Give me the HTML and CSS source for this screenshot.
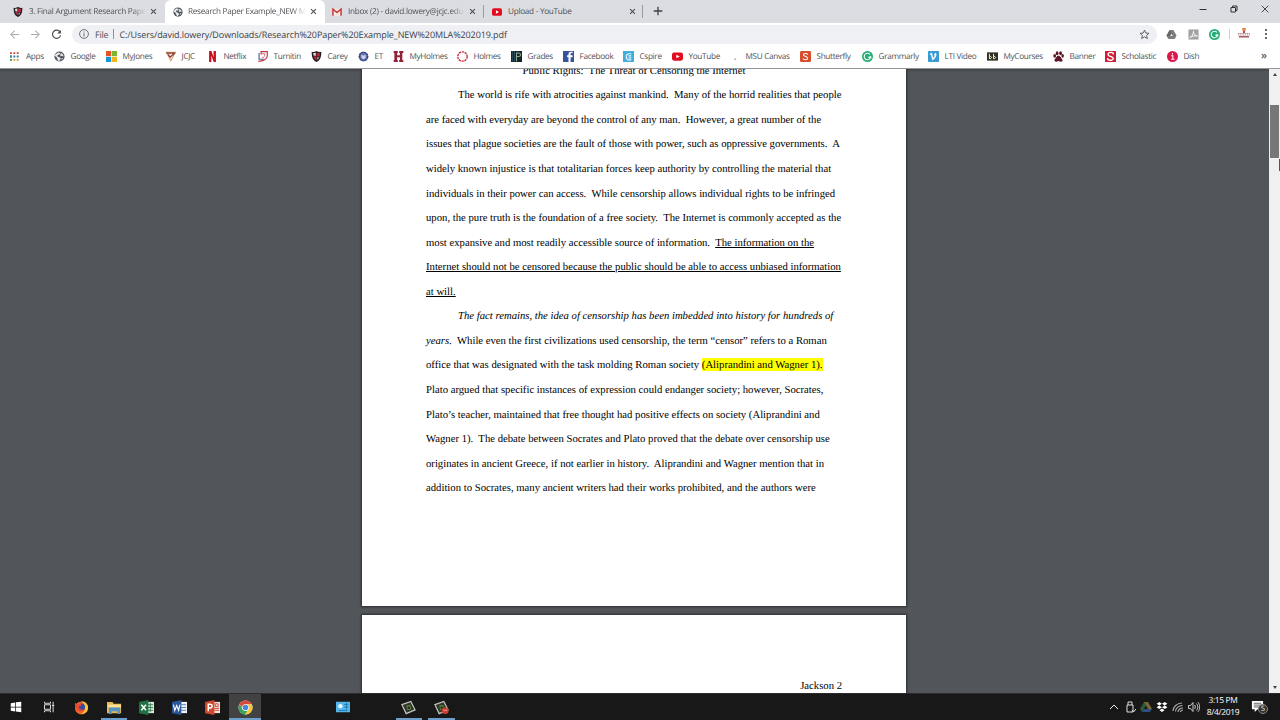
FILE: index.html
```html
<!DOCTYPE html>
<html lang="en">
<head>
<meta charset="utf-8">
<title>Research Paper Example_NEW MLA 2019.pdf</title>
<link rel="stylesheet" href="styles.css">
</head>
<body>
<svg class="defs" aria-hidden="true">
  <symbol id="globe" viewBox="0 0 16 16"><circle cx="8" cy="8" r="7.4" fill="#53575c"/><path d="M2 5l4-3 3 1-1 2-3 1 0 2 3 1 2 2-2 3-1 1-2-3-1-3-3-2zM10 3l3 2 1 3-3-1-1 1-1-2zM11 10l2 0-2 3z" fill="#e8eaed"/></symbol>
  <symbol id="shield" viewBox="0 0 16 16"><path d="M1 1c3 1 5 0 7-1 2 1 4 2 7 1 0 7-1 12-7 15C2 13 1 8 1 1z" fill="#241c20"/><path d="M8 2c2 1 3 1 5 1 0 2 0 3-.4 5H8zM3.400 8H8v5.500C5 12 4 10 3.400 8z" fill="#b32740"/><path d="M3 3c2 0 3 0 4-1v5H4z" fill="#ddd"/><path d="M9 9h3c-1 2-2 3-3 4z" fill="#aaa"/></symbol>
  <symbol id="gmail" viewBox="0 0 16 16"><path d="M1 3h14v11H1z" fill="#f5e9e7"/><path d="M1.500 14V3.500L8 9l6.500-5.500V14" fill="none" stroke="#c93d35" stroke-width="2.400"/></symbol>
  <symbol id="yt" viewBox="0 0 16 16"><rect y="2" width="16" height="12" rx="3" fill="#e30b20"/><path d="M6.300 5.300l5 2.700-5 2.700z" fill="#fff"/></symbol>
  <symbol id="close" viewBox="0 0 10 10"><path d="M1.500 1.500l7 7m0-7l-7 7" stroke="#4a4d52" stroke-width="1.500"/></symbol>
  <symbol id="grammarly" viewBox="0 0 16 16"><circle cx="8" cy="8" r="8" fill="#27ad76"/><path d="M11.500 5A4.700 4.700 0 1 0 12.500 9H9" fill="none" stroke="#fff" stroke-width="1.500"/><path d="M10.500 8h2.500v3" fill="none" stroke="#fff"/></symbol>
  <symbol id="cameraapp" viewBox="0 0 16 16"><path d="M1 5L10.500 1.500 15 10.500 5.500 14.500z" fill="#30362c" stroke="#c5c6be" stroke-width="1.300"/><path d="M5.500 5.500L10 5l1 5-4.500 1z" fill="#55743a"/><path d="M7.500 7l2 .5-.5 2-2-.5z" fill="#20251d"/></symbol>
</svg>

<header class="tabstrip">
  <div class="tab"><svg class="fav"><use href="#shield"/></svg><span class="title fade">3. Final Argument Research Paper</span><svg class="x"><use href="#close"/></svg></div>
  <div class="tab active"><svg class="fav"><use href="#globe"/></svg><span class="title fade">Research Paper Example_NEW M</span><svg class="x"><use href="#close"/></svg></div>
  <div class="tab third"><svg class="fav"><use href="#gmail"/></svg><span class="title fade">Inbox (2) - david.lowery@jcjc.edu</span><svg class="x"><use href="#close"/></svg></div>
  <div class="tab fourth"><svg class="fav"><use href="#yt"/></svg><span class="title">Upload - YouTube</span><svg class="x"><use href="#close"/></svg></div>
  <svg class="plus" viewBox="0 0 10 10"><path d="M5 .7v8.600M.7 5h8.600" stroke="#3c4043" stroke-width="1.300"/></svg>
  <div class="window-controls">
    <svg viewBox="0 0 10 10"><path d="M1.500 5.500h7" stroke="#333"/></svg>
    <svg viewBox="0 0 10 10"><path d="M2 3.500h4.500V8H2zM3.500 3.300V2H8v4.500H6.700" fill="none" stroke="#333"/></svg>
    <svg viewBox="0 0 10 10"><path d="M1.700 1.700l6.600 6.600m0-6.600L1.700 8.300" stroke="#333" stroke-width=".9"/></svg>
  </div>
</header>

<div class="toolbar">
  <svg class="nav" viewBox="0 0 12 12"><path d="M11 6H2m4.200-4.200L2 6l4.200 4.200" fill="none" stroke="#aaabad" stroke-width="1.100"/></svg>
  <svg class="nav" viewBox="0 0 12 12"><path d="M1 6h9M5.800 1.800L10 6l-4.200 4.200" fill="none" stroke="#aaabad" stroke-width="1.100"/></svg>
  <svg class="nav" viewBox="0 0 12 12"><path d="M10 3.300A4.500 4.500 0 1 0 10.500 7" fill="none" stroke="#44474a" stroke-width="1.300"/><path d="M10.800 1v4H6.800z" fill="#44474a"/></svg>
  <div class="omnibox">
    <svg class="info" viewBox="0 0 10 10"><circle cx="5" cy="5" r="4.400" fill="none" stroke="#5f6368" stroke-width=".9"/><path d="M5 4.300v3.200M5 2.500v1" stroke="#5f6368"/></svg>
    <span class="scheme">File</span><i class="bar"></i>
    <span class="url">C:/Users/david.lowery/Downloads/Research%20Paper%20Example_NEW%20MLA%202019.pdf</span>
    <svg class="star" viewBox="0 0 12 12"><path d="M6 1.200l1.400 3.200 3.500.3-2.600 2.300.8 3.400L6 8.600l-3.100 1.800.8-3.400L1.100 4.700l3.500-.3z" fill="none" stroke="#44474b" stroke-width=".9"/></svg>
  </div>
  <svg class="ext" viewBox="0 0 12 12"><path d="M4 1h4l3.500 6-2 4h-7L.5 7z" fill="#7e7e7e"/><path d="M4 1l4 6.500H.5z" fill="#666"/><path d="M6 5l1.500 2.500h-3z" fill="#eee"/></svg>
  <svg class="ext" viewBox="0 0 12 12"><path d="M.5.500h11v11H.5z" fill="#a2a2a2"/><path d="M2 9.500c2-1 4-4 4-7 0 3 2 5 4.200 5.200C7 7 4 8 2 9.500z" fill="none" stroke="#fff"/></svg>
  <svg class="ext"><use href="#grammarly"/></svg>
  <i class="ext-bar"></i>
  <svg class="avatar" viewBox="0 0 14 12"><path d="M5 1h4L8.500 4h-3z" fill="#db8d4f"/><path d="M6 4h2v2H6z" fill="#a74a4a"/><path d="M1 6.500h12M1 8h12" stroke="#b98087" stroke-dasharray="1.500 .7"/><path d="M2 9.800h10" stroke="#934149" stroke-width="1.300"/></svg>
  <svg class="dots" viewBox="0 0 4 12"><circle cx="2" cy="2" r="1" fill="#333"/><circle cx="2" cy="6" r="1" fill="#333"/><circle cx="2" cy="10" r="1" fill="#333"/></svg>
</div>

<nav class="bookmarks">
  <a><svg viewBox="0 0 16 16"><g stroke-width="3.400" stroke-dasharray="3.400 2.600"><path d="M0 2h16" stroke="#cc4a3b"/><path d="M0 8h16" stroke="#4275a8"/><path d="M0 14h16" stroke="#c8a13b"/></g><path d="M0 6.300h3.400v3.400H0zM0 12.300h3.400v3.400H0z" fill="#3a9a5c"/></svg>Apps</a>
  <a><svg><use href="#globe"/></svg>Google</a>
  <a><svg viewBox="0 0 16 16"><path d="M0 0h7.500v7.500H0z" fill="#e65325"/><path d="M8.500 0H16v7.500H8.500z" fill="#78b72d"/><path d="M0 8.500h7.500V16H0z" fill="#1798d5"/><path d="M8.500 8.500H16V16H8.500z" fill="#f4b51b"/></svg>MyJones</a>
  <a><svg viewBox="0 0 16 16"><path d="M2 2h13L8.500 14z" fill="#faecd5" stroke="#cf9a67" stroke-width="1.500"/><path d="M2 3h13M4.500 5l3 4 5.500-5" stroke="#8a3438" stroke-width="1.700" fill="none"/></svg>JCJC</a>
  <a><svg viewBox="0 0 16 16"><path d="M3 0h3.500l3 9V0H13v16H9.800L6.300 7v9H3z" fill="#cb1020"/></svg>Netflix</a>
  <a><svg viewBox="0 0 16 16"><path d="M3 3v9h7" stroke="#43639a" stroke-width="1.700" fill="none"/><path d="M6 5V1h9v6c0 5-6 8-13 8" stroke="#c73245" stroke-width="1.700" fill="none"/><path d="M7 4h4c1 3-1 6-4 6" stroke="#c73245" fill="none"/></svg>Turnitin</a>
  <a><svg><use href="#shield"/></svg>Carey</a>
  <a><svg viewBox="0 0 16 16"><circle cx="8" cy="8" r="7" fill="#6672aa"/><circle cx="8" cy="8" r="6" fill="none" stroke="#304488" stroke-width="2" stroke-dasharray="3 1"/><path d="M5 5l3 2 3-2v5l-3 2-3-2z" fill="#d2d4e6"/></svg>ET</a>
  <a><svg viewBox="0 0 16 16"><path d="M1 0h6v3H6v3h4V3H9V0h6v3h-1.500v10H15v3H9v-3h1V9H6v4h1v3H1v-3h1V3H1z" fill="#922238"/></svg>MyHolmes</a>
  <a><svg viewBox="0 0 16 16"><circle cx="8" cy="8" r="6.800" fill="none" stroke="#c42d38" stroke-width="2" stroke-dasharray="3.300 1"/></svg>Holmes</a>
  <a><svg viewBox="0 0 16 16"><path d="M0 0h16v16H0z" fill="#192229"/><path d="M2 0v16M5 0v16" stroke="#355e75"/><path d="M8 15V3h3c4 0 4 5 0 5H8" fill="none" stroke="#8caa94" stroke-width="1.500"/></svg>Grades</a>
  <a><svg viewBox="0 0 16 16"><path d="M0 0h16v16H0z" fill="#35549a"/><path d="M11 16V9h3V6h-3V4.500c0-1 .5-1.500 1.500-1.500H14V1h-3C9 1 8 2.500 8 4v2H6v3h2v7z" fill="#fff"/></svg>Facebook</a>
  <a><svg viewBox="0 0 16 16"><path d="M0 0h16v16H0z" fill="#42addc"/><path d="M12 4H8L5 6v5l2 2h5M8 7h4M8 10h4" fill="none" stroke="#e6f7ff" stroke-width="1.700"/></svg>Cspire</a>
  <a><svg><use href="#yt"/></svg>YouTube</a>
  <a><svg viewBox="0 0 16 16"><path d="M7 12l4-2-2 3z" fill="#8a8d7c"/></svg>MSU Canvas</a>
  <a><svg viewBox="0 0 16 16"><rect width="16" height="16" rx="2" fill="#d84d2c"/><path d="M11.500 5C10 3 4.500 3 5 6c.5 2 6 1.500 6 4.500 0 3-5.500 2.500-6.500.5" fill="none" stroke="#fff" stroke-width="1.500"/></svg>Shutterfly</a>
  <a><svg><use href="#grammarly"/></svg>Grammarly</a>
  <a><svg viewBox="0 0 16 16"><rect width="16" height="16" rx="1" fill="#399bd4"/><path d="M3 5l2-1 2 8c4-3 5-7 4-8L9 6" fill="none" stroke="#fff" stroke-width="2"/></svg>LTI Video</a>
  <a><svg viewBox="0 0 16 16"><path d="M0 2h16v12H0z" fill="#303020"/><path d="M3.500 4v7.500M3.500 8.500a1.700 1.500 0 1 1 0 2M9.500 4v7.500M9.500 8.500a1.700 1.500 0 1 1 0 2" fill="none" stroke="#f7f3cf" stroke-width="1.400"/></svg>MyCourses</a>
  <a><svg viewBox="0 0 16 16"><g fill="#5e1525"><ellipse cx="2.500" cy="7" rx="2" ry="2.800"/><ellipse cx="6" cy="3.300" rx="2" ry="3"/><ellipse cx="11" cy="3.300" rx="2" ry="3"/><ellipse cx="14" cy="7" rx="1.800" ry="2.800"/><path d="M8 7c3 0 4 4 6 6 0 3-3 3-6 1.500C5 16 2 16 2 13c2-2 3-6 6-6z"/></g></svg>Banner</a>
  <a><svg viewBox="0 0 16 16"><path d="M0 0h16v16H0z" fill="#d01d38"/><path d="M12 5V3C8 1 4 2.500 4.500 5.500 5 8.500 12 7 12 11c0 3-5 3-8 1.500V10" fill="none" stroke="#fff" stroke-width="2"/></svg>Scholastic</a>
  <a><svg viewBox="0 0 16 16"><circle cx="8" cy="8" r="8" fill="#dc174a"/><path d="M6 7h2.500v5m-2.500 0h5M8 3v2" stroke="#fff" stroke-width="1.500" fill="none"/></svg>Dish</a>
  <b>»</b>
</nav>

<main class="viewer">
  <div class="pages">
    <article class="page first">
      <h1>Public Rights:&nbsp; The Threat of Censoring the Internet</h1>
      <p class="indent">The world is rife with atrocities against mankind.&nbsp; Many of the horrid realities that people</p>
      <p>are faced with everyday are beyond the control of any man.&nbsp; However, a great number of the</p>
      <p>issues that plague societies are the fault of those with power, such as oppressive governments.&nbsp; A</p>
      <p>widely known injustice is that totalitarian forces keep authority by controlling the material that</p>
      <p>individuals in their power can access.&nbsp; While censorship allows individual rights to be infringed</p>
      <p>upon, the pure truth is the foundation of a free society.&nbsp; The Internet is commonly accepted as the</p>
      <p>most expansive and most readily accessible source of information.&nbsp; <u>The information on the</u></p>
      <p><u>Internet should not be censored because the public should be able to access unbiased information</u></p>
      <p><u>at will.</u></p>
      <p class="indent"><em>The fact remains, the idea of censorship has been imbedded into history for hundreds of</em></p>
      <p><em>years.</em>&nbsp; While even the first civilizations used censorship, the term “censor” refers to a Roman</p>
      <p>office that was designated with the task molding Roman society <mark>(Aliprandini and Wagner 1).</mark></p>
      <p>Plato argued that specific instances of expression could endanger society; however, Socrates,</p>
      <p>Plato’s teacher, maintained that free thought had positive effects on society (Aliprandini and</p>
      <p>Wagner 1).&nbsp; The debate between Socrates and Plato proved that the debate over censorship use</p>
      <p>originates in ancient Greece, if not earlier in history.&nbsp; Aliprandini and Wagner mention that in</p>
      <p>addition to Socrates, many ancient writers had their works prohibited, and the authors were</p>
    </article>
    <article class="page second"><div class="running-head">Jackson 2</div></article>
  </div>
  <div class="scrollbar"><i class="arrow up"></i><i class="thumb"></i><i class="arrow down"></i></div>
  <i class="cursor"></i>
</main>

<footer class="taskbar">
  <div class="app start"><svg viewBox="0 0 16 16"><path d="M1 3l6-1v5.500H1zM8 1.800L15 1v6.500H8zM1 8.500h6V14l-6-1zM8 8.500h7V15l-7-1z" fill="#fff"/></svg></div>
  <div class="app"><svg viewBox="0 0 16 16"><path d="M2 1v2h8V1M2 15v-2h8v2M2 5h8v6H2zM13.500 1v14M12 6h3" fill="none" stroke="#dedede" stroke-width="1.300"/></svg></div>
  <div class="app"><svg class="large" viewBox="0 0 16 16"><circle cx="8" cy="8.500" r="7" fill="#ec662c"/><path d="M8 1c5 1 7.500 4 7 8-1 4-4 6-8 6 5-2 7-8 1-14z" fill="#f9c632"/><circle cx="8" cy="7.500" r="3.800" fill="#3b48a4"/><path d="M1 3l3 2 3-1 1 2-3 1c0 3 3 4 6 3-2 3-7 3-9-1C1 7 1 5 1 3z" fill="#ed492d"/></svg></div>
  <div class="app running"><svg class="large" viewBox="0 0 16 16"><path d="M0 2h6l1 2h8v10H0z" fill="#e7b856"/><path d="M1 5h14v3H1z" fill="#ffe194"/><path d="M2 8h12v7h-3v-3H5v3H2z" fill="#5296c9"/></svg></div>
  <div class="app"><svg class="large" viewBox="0 0 16 16"><path d="M8 2h8v12H8z" fill="#d6eadb"/><path d="M9 5h6M9 8h6M9 11h6M12 3v10" stroke="#387d50"/><path d="M0 2l10-2v16L0 14z" fill="#207244"/><path d="M2.500 5l5 6m0-6l-5 6" stroke="#fff" stroke-width="1.600"/></svg></div>
  <div class="app"><svg class="large" viewBox="0 0 16 16"><path d="M8 2h8v12H8z" fill="#f0f4fa"/><path d="M10 5h5M10 8h5M10 11h5" stroke="#5b7bab"/><path d="M0 2l10-2v16L0 14z" fill="#2a579a"/><path d="M1.500 5l1.500 6 2-5 2 5 1.500-6" stroke="#fff" stroke-width="1.200" fill="none"/></svg></div>
  <div class="app"><svg class="large" viewBox="0 0 16 16"><path d="M8 2h8v12H8z" fill="#f6ddd5"/><path d="M11 4h3v3h-3zM10 9h5M10 11h5" fill="none" stroke="#c24d34"/><path d="M0 2l10-2v16L0 14z" fill="#cf472b"/><path d="M3.500 12V4.500H5c4 0 3 4 0 4H3.500" stroke="#fff" stroke-width="1.600" fill="none"/></svg></div>
  <div class="app running current"><svg class="large" viewBox="0 0 16 16"><circle cx="8" cy="8" r="7.500" fill="#e5e5e5"/><path d="M1.500 4.300A7.500 7.500 0 0 1 14.600 4.500H8L5 9z" fill="#da4939"/><path d="M14.600 4.500A7.500 7.500 0 0 1 7.500 15.500L11.200 9.500 10 4.500z" fill="#f5c83b"/><path d="M1.500 4.300L5 10l5 1.500-2.500 4A7.500 7.500 0 0 1 1.500 4.300z" fill="#3ba45b"/><circle cx="8" cy="8" r="3.600" fill="#fff"/><circle cx="8" cy="8" r="2.900" fill="#4b86dc"/></svg></div>
  <div class="app panel"><svg viewBox="0 0 16 16"><path d="M0 2h16v12H0z" fill="#56b6e8"/><circle cx="5" cy="7" r="2.500" fill="#e6f7ff"/><path d="M9 5h5M9 8h5M3 12h10M12 3v8" stroke="#1d77b6"/></svg></div>
  <div class="app running recorder"><svg class="large"><use href="#cameraapp"/></svg></div>
  <div class="app running"><svg class="large" viewBox="0 0 16 16"><use href="#cameraapp" width="16" height="16"/><circle cx="12" cy="11.500" r="3.500" fill="#d23d30"/><path d="M10 11h4" stroke="#eaa59e"/></svg></div>
  <div class="tray">
    <svg viewBox="0 0 12 12"><path d="M2 8l4-4 4 4" fill="none" stroke="#eee"/></svg>
    <svg viewBox="0 0 12 12"><path d="M4 4V1h4v3M3 4h6v7H3zM8 9l1.500 2L12 8" fill="none" stroke="#ddd"/></svg>
    <svg viewBox="0 0 12 12"><path d="M4 1h4L4 8 2 11 0 8z" fill="#2c5941"/><path d="M4 1h4l4 7H8z" fill="#7b6730"/><path d="M4 8h8l-2 3H2z" fill="#2d4e83"/></svg>
    <svg viewBox="0 0 12 12"><path d="M3.300 1L6 2.800 3.300 4.500.6 2.800zM8.700 1l2.700 1.800-2.700 1.700L6 2.800zM3.300 4.500L6 6.300 3.300 8 .6 6.300zM8.700 4.500l2.700 1.800L8.700 8 6 6.300zM6 7.400l2.500 1.800L6 11 3.500 9.200z" fill="#fff"/></svg>
    <svg viewBox="0 0 12 12"><path d="M1 10c0-4 4-8 9-8M3.500 10.500c0-3 3-6 7-6M6 11c0-2 2-4 5-4M8.500 11c0-1 1-2 2.500-2" fill="none" stroke="#aaa" stroke-width="1.100"/></svg>
    <svg viewBox="0 0 12 12"><path d="M.5 4.500h2l2.500-3v9l-2.500-3h-2zM6.500 4c1 1 1 3 0 4M8.300 2.500c2 2 2 5 0 7M10 1.200c2.300 3 2.300 6.500 0 9.600" fill="none" stroke="#ddd" stroke-width=".9"/></svg>
  </div>
  <div class="clock"><span>3:15 PM</span><span>8/4/2019</span></div>
  <div class="notice"><svg viewBox="0 0 14 14"><path d="M1 1h12v9H7l-3 3v-3H1z" fill="#fff"/><path d="M3 3.500h8M3 5.500h8M3 7.500h8" stroke="#333" stroke-width=".8"/></svg><span>5</span></div>
</footer>
</body>
</html>
```
FILE: styles.css
```css
* { box-sizing: border-box; }
body {
  margin: 0; width: 1280px; height: 720px; overflow: hidden;
  display: flex; flex-direction: column; background: #fff;
  font-family: "Open Sans", "Noto Sans", sans-serif; font-size: 8.200px; letter-spacing: -.28px; color: #505256;
  text-rendering: geometricPrecision;
}
svg { display: block; flex: none; }
.defs { position: absolute; width: 0; height: 0; }

.tabstrip { height: 23px; flex: none; display: flex; background: #dcdde2; }
.tab { height: 23px; display: flex; align-items: center; width: 159px; padding-left: 7px; }
.tab:first-child { width: 165px; padding-left: 13px; }
.tab.active { width: 160px; padding-left: 8px; background: #fff; border-radius: 6px 6px 0 0; }
.tab.third, .tab.fourth { background: linear-gradient(#999ca1, #999ca1) right center / 1px 13px no-repeat; }
.tab.fourth { padding-left: 8px; }
.fav { width: 10px; height: 10px; margin-right: 6px; }
.title { width: 117px; white-space: nowrap; line-height: 14px; }
.active .title { margin-left: -1px; width: 118px; }
.fade { -webkit-mask-image: linear-gradient(90deg, #000 88%, transparent); mask-image: linear-gradient(90deg, #000 88%, transparent); }
.x { width: 7px; height: 7px; margin-left: 4px; }
.plus { width: 10px; height: 10px; margin: 6px 0 0 10px; }
.window-controls { display: flex; gap: 21px; margin: 4px 10px 0 auto; }
.window-controls svg { width: 10px; height: 10px; }

.toolbar { height: 22px; flex: none; display: flex; align-items: center; padding-left: 9px; }
.nav { width: 11px; height: 11px; margin-right: 10px; }
.omnibox { width: 1085px; height: 19px; border-radius: 10px; background: #eff0f4; display: flex; align-items: center; padding-left: 7px; font-size: 9px; letter-spacing: -.09px; }
.info { width: 10px; height: 10px; }
.scheme { margin-left: 6px; width: 14px; letter-spacing: -.2px; }
.bar { width: 1px; height: 10px; background: #909398; margin: 0 5.500px 0 4px; }
.url { color: #3d4045; white-space: nowrap; }
.star { width: 11px; height: 11px; margin: 0 7px 0 auto; }
.ext { width: 11px; height: 11px; margin-left: 10.500px; }
.omnibox + .ext { margin-left: 9px; }
.ext-bar { width: 1px; height: 10px; background: #d7c9cb; margin: 0 7px 0 9px; }
.avatar { width: 14px; height: 12px; margin-top: -2px; }
.dots { width: 4px; height: 12px; margin-left: 13px; }

.bookmarks {
  height: 23px; flex: none; display: grid; align-items: center; padding-left: 10px;
  grid-template-columns: 44px 52px 59px 42px 50px 54px 47px 35px 64px 54px 52px 60px 49px 57px 71px 62px 66px 59px 66px 52px 62px 94px 19px;
}
.bookmarks a { display: flex; align-items: center; white-space: nowrap; letter-spacing: -.32px; }
.bookmarks svg { width: 11px; height: 11px; margin-right: 5.500px; }
.bookmarks a:first-child svg { width: 9px; height: 9px; margin-right: 7px; }
.bookmarks b { font-size: 11px; font-weight: 600; line-height: 12px; margin-top: -2px; }

.viewer { height: 625px; flex: none; position: relative; display: flex; background: #525559; border-top: 1px solid #949598; overflow: hidden; }
.pages { flex: 1; height: 624px; overflow: hidden; background: linear-gradient(#404246, #525559 3px); }
.page { width: 544px; margin-left: 362px; background: #fff; box-shadow: 0 0 2px 1px #2c2e32; font-family: "Liberation Serif", serif; font-size: 10.690px; letter-spacing: 0; color: #000; }
.first { height: 548px; margin-top: -11px; padding: .7px 64px 0; }
.page h1, .page p { margin: 0; font-size: 10.690px; line-height: 24.560px; font-weight: 400; white-space: nowrap; }
.page h1 { text-align: center; }
.page .indent { padding-left: 32px; }
.page u { text-underline-offset: 1px; text-decoration-thickness: .8px; }
mark { background: #ff0; color: #000; padding: 1px 1px 0 0; }
.second { height: 100px; margin-top: 9px; padding: 64.800px 64px 0; }
.running-head { text-align: right; line-height: 12px; }
.scrollbar { width: 11px; background: #f0f0f0; display: flex; flex-direction: column; align-items: center; padding: 4px 0; }
.arrow { width: 0; height: 0; border: 2.500px solid transparent; }
.up { border-top: 0; border-bottom: 3px solid #444; }
.down { border-bottom: 0; border-top: 3px solid #444; margin-top: auto; }
.thumb { width: 9px; height: 53px; background: #777; margin-top: 29px; }
.cursor { position: absolute; right: 0; top: 90px; width: 1px; height: 12px; background: #555; }

.taskbar { height: 26px; margin-top: 1px; flex: none; display: flex; background: #181818; color: #fff; box-shadow: 0 -1px #2b2b2d; }
.app { width: 26.500px; margin-right: 6.300px; display: flex; align-items: center; justify-content: center; }
.app svg { width: 12px; height: 12px; }
.app svg.large { width: 15px; height: 15px; }
.start { margin-left: 2.500px; }
.running { border-bottom: 2px solid #6c9fce; padding-top: 2px; }
.current { width: 32px; background: #424242; margin-left: -3px; }
.panel { margin-left: 62.500px; }
.panel svg { width: 14px; height: 14px; }
.recorder { margin-left: 33px; }
.tray { display: flex; align-items: center; gap: 4px; margin-left: auto; }
.tray svg { width: 12px; height: 12px; }
.clock { width: 40px; margin-left: 3px; display: flex; flex-direction: column; align-items: center; line-height: 12px; padding-top: 1px; font-size: 8.400px; letter-spacing: -.32px; }
.notice { position: relative; width: 29px; margin-left: 8px; padding-top: 6px; }
.notice svg { width: 13px; height: 13px; }
.notice span { position: absolute; left: 7px; top: 10px; width: 10px; height: 10px; border-radius: 50%; background: #303030; border: 1px solid #888; font-size: 7.500px; line-height: 8px; text-align: center; letter-spacing: 0; }
```
